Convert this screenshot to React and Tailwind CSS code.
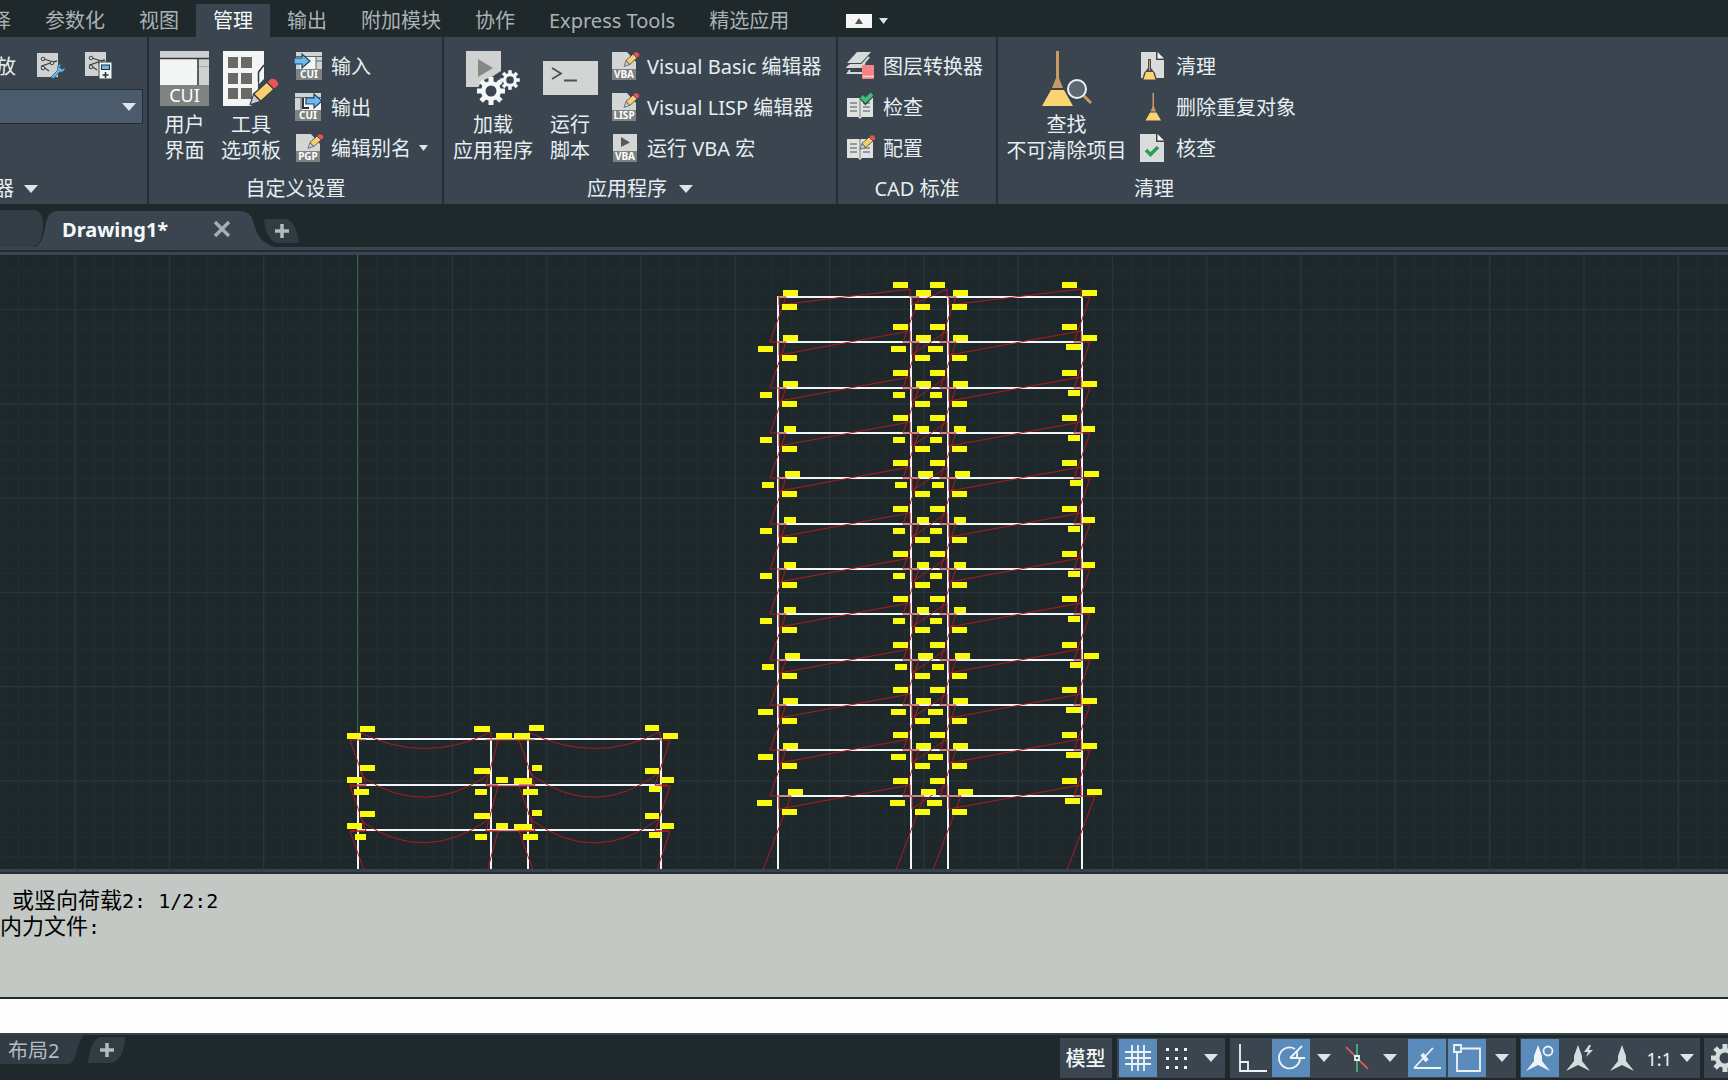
import React from "react";

const MENU_TABS = ["选择", "参数化", "视图", "管理", "输出", "附加模块", "协作", "Express Tools", "精选应用"];

/* ---------- small shared drawings ---------- */

const Caret = ({ small }) => (
  <svg width={small ? 9 : 14} height={small ? 6 : 8} viewBox="0 0 14 8" className="shrink-0" preserveAspectRatio="none">
    <path d="M0 0H14L7 8Z" fill="#dbe4e8" />
  </svg>
);

const Pencil = ({ transform }) => (
  <g transform={transform} strokeLinejoin="round">
    <path d="M0 19L3 10L9 16Z" fill="#c9cdd0" stroke="#3a454f" />
    <path d="M3 10L14 0L20 6L9 16Z" fill="#f7cf73" stroke="#3b3b34" strokeWidth="1.2" />
    <path d="M14 0L17 -3Q21 -4 23 -1Q25 2 23 4L20 6Z" fill="#ea5455" stroke="#3a454f" />
  </g>
);

const Tag = ({ text, y = 17, w = 24 }) => (
  <>
    <rect x="1" y={y} width={w} height="11" fill="#7e8281" />
    <text x={1 + w / 2} y={y + 9} fontSize="10" fontWeight="700" textAnchor="middle" fill="#fff">
      {text}
    </text>
  </>
);

const Icon = ({ children }) => (
  <svg width="28" height="28" viewBox="0 0 28 28" className="shrink-0 overflow-visible">
    {children}
  </svg>
);

const Arrow = ({ x, y }) => (
  <path
    transform={`translate(${x} ${y})`}
    d="M0 4H8V0L16 7L8 14V10H0Z"
    fill="#6cb8f0"
    stroke="#25425a"
    strokeWidth="1.2"
  />
);

const ImportIcon = () => (
  <Icon>
    <path d="M1 0H27V18H1Z" fill="#cfd3d1" />
    <path d="M5 5H21V18H5Z" fill="#f2f5f4" />
    <path d="M1 4.500H27M21 4V18M21 9H27" stroke="#5d666b" fill="none" />
    <Arrow x={-1} y={2} />
    <Tag text="CUI" w={26} />
  </Icon>
);

const ExportIcon = () => (
  <Icon>
    <path d="M0 0H26V18H0Z" fill="#cfd3d1" />
    <path d="M7 5H26V18H7Z" fill="#f2f5f4" />
    <path d="M0 4.500H26M6 4V18" stroke="#5d666b" fill="none" />
    <path d="M8 5V15H14" stroke="#2c3338" strokeWidth="2" fill="none" />
    <Arrow x={11} y={1} />
    <g transform="translate(-1 0)"><Tag text="CUI" w={26} /></g>
  </Icon>
);

const EditTagIcon = ({ text }) => (
  <Icon>
    <path d="M1 0H16L25 10V18H1Z" fill="#d3d6d4" />
    <Tag text={text} />
    <Pencil transform="translate(13 2) scale(.65)" />
  </Icon>
);

const RunVbaIcon = () => (
  <Icon>
    <path d="M2 0H26V18H2Z" fill="#d3d6d4" />
    <path d="M10 3L19 8.500L10 13Z" fill="#55595a" />
    <g transform="translate(1 0)"><Tag text="VBA" /></g>
  </Icon>
);

const LayerIcon = () => (
  <Icon>
    <path d="M10 0H24L14 11H0Z" fill="#d6dad8" />
    <path d="M3 13H15L22 5M3 13L1 15H14L18 11M3 18L1 21H15" fill="none" stroke="#d6dad8" strokeWidth="2" />
    <rect x="15" y="13" width="12" height="14" rx="1" fill="#f58484" />
    <path d="M16 24.500H27" stroke="#fbd5d3" strokeWidth="1.500" />
  </Icon>
);

const Book = () => (
  <>
    <path d="M0 5H12L13 6L14 5H26V24H15L13 26L11 24H0Z" fill="#dfe2df" />
    <path d="M13 6V24" stroke="#7b8082" />
    <path d="M3 10H10M3 14H10M3 18H10M16 10H23M16 14H23M16 18H23" stroke="#7e8386" strokeWidth="1.500" />
  </>
);

const CheckBookIcon = () => (
  <Icon>
    <Book />
    <path d="M15 4L18.500 8L25 1" fill="none" stroke="#3a454f" strokeWidth="6" />
    <path d="M14.500 3.500L18.500 7.500L25 1" fill="none" stroke="#3cc173" strokeWidth="4" />
  </Icon>
);

const ConfigBookIcon = () => (
  <Icon>
    <Book />
    <Pencil transform="translate(13 3) scale(.65)" />
  </Icon>
);

const Broom = () => (
  <>
    <path d="M14 0H17V28H14Z" fill="#c79a64" />
    <path d="M14 27H17L21 37H10Z" fill="#c79a64" />
    <path d="M9 39H22L31 55H0Z" fill="#fbd373" />
  </>
);

const PageIcon = ({ children }) => (
  <Icon>
    <path d="M1 0H16V8H24V26H1Z" fill="#d9dcda" />
    <path d="M17.500 0L24 6.500H17.500Z" fill="#f4f6f5" />
    {children}
  </Icon>
);

const PurgeIcon = () => (
  <PageIcon>
    <path d="M8 7H11V16L15 21L17 28H2L4 21L8 16Z" fill="#4c4c47" />
    <path d="M9 8H10V19H9Z" fill="#c79a64" />
    <path d="M6 20H13L15.500 27.500H3.500Z" fill="#fbd373" />
  </PageIcon>
);

const BroomIcon = () => (
  <Icon>
    <g transform="translate(5.500 0) scale(.5)"><Broom /></g>
  </Icon>
);

const AuditIcon = () => (
  <Icon>
    <path d="M0 0H16V8H24V28H0Z" fill="#d9dcda" />
    <path d="M17.500 0L24 6.500H17.500Z" fill="#f4f6f5" />
    <path d="M6 16L10.500 20.500L18 13" fill="none" stroke="#27a05a" strokeWidth="3.500" />
  </Icon>
);

const ActionRecorder = () => (
  <>
    <path d="M0 0H21V24H0Z" fill="#cfd2d0" />
    <path d="M7 6L16 9L5 13L12 18M16 9L20 8M5 13V17" fill="none" stroke="#3f4547" strokeWidth="1.300" />
    <circle cx="6" cy="6" r="1.800" fill="#cfd2d0" stroke="#3f4547" />
    <circle cx="15" cy="10" r="1.800" fill="#cfd2d0" stroke="#3f4547" />
    <circle cx="6" cy="15" r="1.800" fill="#cfd2d0" stroke="#3f4547" />
  </>
);

const RecorderPrefIcon = () => (
  <Icon>
    <g transform="translate(0 1)"><ActionRecorder /></g>
    <path d="M14 25L21 18Q19 12 25 12L22.500 15L25 17.500L28 15Q28 21 22.500 20L16 27Z" fill="#6cb8f0" stroke="#33506a" strokeWidth=".8" />
  </Icon>
);

const RecorderManageIcon = () => (
  <Icon>
    <ActionRecorder />
    <rect x="14" y="10" width="13" height="17" fill="#f3f6f5" stroke="#3a454f" />
    <rect x="16.500" y="13" width="8" height="4.500" fill="#6cb8f0" stroke="#233" />
    <path d="M20.500 20V26M17.500 23H23.500" stroke="#233" strokeWidth="1.500" />
  </Icon>
);

/* ---------- large ribbon icons ---------- */

const CuiIcon = () => (
  <svg width="49" height="55" viewBox="0 0 49 55">
    <path d="M0 0H49V55H0Z" fill="#cdd1cf" />
    <path d="M0 8H37V34H0Z" fill="#f3f6f4" />
    <path d="M0 7.500H49M38 8V34" stroke="#343b40" strokeWidth="1.500" />
    <path d="M39 15.500H49" stroke="#a4a9a8" />
    <path d="M0 34H49V55H0Z" fill="#7f8381" />
    <text x="24.500" y="51" fontSize="18" textAnchor="middle" fill="#fff">CUI</text>
  </svg>
);

const PaletteIcon = () => (
  <svg width="56" height="55" viewBox="0 0 56 55">
    <path d="M0 0H41V14L35 22V40L28 55H0Z" fill="#f3f6f4" />
    <path d="M36 22L41 14V28L36 33Z" fill="#f3f6f4" />
    <path d="M35.500 31V21L41 14" fill="none" stroke="#343b40" strokeWidth="1.500" />
    <path d="M5 6H15V17H5ZM18 6H29V17H18ZM5 22H15V33H5ZM18 22H29V33H18ZM5 37H15V48H5ZM18 37H29V48H18Z" fill="#6a6965" />
    <Pencil transform="translate(27 31) scale(1.200)" />
  </svg>
);

const gearTeeth = [0, 45, 90, 135, 180, 225, 270, 315];

const Gear = ({ x, y, s = 1, fill = "#f5f8f8", hole = "#3a454f" }) => (
  <g transform={`translate(${x} ${y}) scale(${s})`}>
    {gearTeeth.map((a) => (
      <rect key={a} x="-2.500" y="-14" width="5" height="7" fill={fill} transform={`rotate(${a})`} />
    ))}
    <circle r="10" fill={fill} />
    <circle r="5.500" fill={hole} />
  </g>
);

const LoadAppIcon = () => (
  <svg width="54" height="55" viewBox="0 0 54 55">
    <path d="M0 0H35V20L24 27L14 36H0Z" fill="#cfd2d1" />
    <path d="M12 8L27 17L12 26Z" fill="#858a89" />
    <circle cx="25" cy="40" r="13" fill="#3a454f" />
    <Gear x={25} y={40} />
    <Gear x={44} y={29} s={0.7} />
  </svg>
);

const ScriptIcon = () => (
  <svg width="55" height="55" viewBox="0 0 55 55">
    <path d="M0 10H55V44H0Z" fill="#d2d5d3" />
    <path d="M9 17L18 22.500L9 28M21 29.500H34" fill="none" stroke="#4b5154" strokeWidth="1.800" />
  </svg>
);

const FindPurgeIcon = () => (
  <svg width="50" height="55" viewBox="0 0 50 55">
    <Broom />
    <circle cx="35" cy="38" r="9.500" fill="#5b6771" stroke="#3a454f" strokeWidth="4" />
    <path d="M42 45L49 52" stroke="#c79a64" strokeWidth="3" />
    <circle cx="35" cy="38" r="9" fill="#5b6771" stroke="#eef3f4" strokeWidth="2" />
  </svg>
);

/* ---------- ribbon ---------- */

const Panel = ({ title, caret, className, children }) => (
  <section className={`flex flex-col shrink-0 h-full ${className}`}>
    <div className="flex gap-2 h-[131px] pt-[9px] pl-[5px]">{children}</div>
    <h2 className="flex items-center justify-center gap-3 h-9 pt-1.5 leading-6">
      {title}
      {caret && <Caret />}
    </h2>
  </section>
);

const BigButton = ({ icon, lines, className }) => (
  <button className={`flex flex-col items-center pt-[5px] leading-[26px] ${className}`}>
    {icon}
    <span className="flex flex-col pt-1.5 text-center whitespace-nowrap">
      <span>{lines[0]}</span>
      <span>{lines[1]}</span>
    </span>
  </button>
);

const ToolList = ({ items, className = "" }) => (
  <ul className={`flex flex-col gap-px ${className}`}>
    {items.map(({ icon, label, menu }) => (
      <li key={label}>
        <button className="flex items-center gap-2 h-10 whitespace-nowrap">
          {icon}
          <span className="pt-0.5">{label}</span>
          {menu && <Caret small />}
        </button>
      </li>
    ))}
  </ul>
);

const Ribbon = () => (
  <div className="flex h-[167px] shrink-0 overflow-hidden bg-[#3a454f] text-[#e6eef2]">
    <section className="flex flex-col shrink-0 w-[149px] border-r-2 border-[#222d38]">
      <div className="flex items-center h-10 mt-[9px]">
        <button className="w-10 -ml-6 mr-[21px] pt-0.5 text-left whitespace-nowrap">播放</button>
        <button className="mr-5" aria-label="首选项"><RecorderPrefIcon /></button>
        <button aria-label="管理动作宏"><RecorderManageIcon /></button>
      </div>
      <div className="relative mt-[3px] mr-1">
        <select aria-label="动作宏" className="block appearance-none w-full h-[35px] bg-[#4b5b6b] border border-l-0 border-[#222d38]">
          <option></option>
        </select>
        <span className="absolute right-[7px] top-[14px] pointer-events-none"><Caret /></span>
      </div>
      <h2 className="flex items-center gap-[10px] h-9 pt-1.5 mt-11 -ml-[126px] leading-6 whitespace-nowrap">
        <span className="w-[140px] text-right">动作录制器</span>
        <Caret />
      </h2>
    </section>

    <Panel title="自定义设置" className="w-[295px] border-r-2 border-[#222d38]">
      <div className="flex">
        <BigButton icon={<CuiIcon />} lines={["用户", "界面"]} className="w-[61px]" />
        <BigButton icon={<PaletteIcon />} lines={["工具", "选项板"]} className="w-[72px]" />
      </div>
      <ToolList
        items={[
          { icon: <ImportIcon />, label: "输入" },
          { icon: <ExportIcon />, label: "输出" },
          { icon: <EditTagIcon text="PGP" />, label: "编辑别名", menu: true },
        ]}
      />
    </Panel>

    <Panel title="应用程序" caret className="w-[394px] border-r-2 border-[#222d38]">
      <div className="flex">
        <BigButton icon={<LoadAppIcon />} lines={["加载", "应用程序"]} className="w-[88px]" />
        <BigButton icon={<ScriptIcon />} lines={["运行", "脚本"]} className="w-[66px]" />
      </div>
      <ToolList
        items={[
          { icon: <EditTagIcon text="VBA" />, label: "Visual Basic 编辑器" },
          { icon: <EditTagIcon text="LISP" />, label: "Visual LISP 编辑器" },
          { icon: <RunVbaIcon />, label: "运行 VBA 宏" },
        ]}
      />
    </Panel>

    <Panel title="CAD 标准" className="w-[160px] border-r-2 border-[#222d38]">
      <ToolList
        className="pl-1"
        items={[
          { icon: <LayerIcon />, label: "图层转换器" },
          { icon: <CheckBookIcon />, label: "检查" },
          { icon: <ConfigBookIcon />, label: "配置" },
        ]}
      />
    </Panel>

    <Panel title="清理" className="w-[312px]">
      <BigButton icon={<FindPurgeIcon />} lines={["查找", "不可清除项目"]} className="w-[127px]" />
      <ToolList
        className="pl-0.5"
        items={[
          { icon: <PurgeIcon />, label: "清理" },
          { icon: <BroomIcon />, label: "删除重复对象" },
          { icon: <AuditIcon />, label: "核查" },
        ]}
      />
    </Panel>
  </div>
);

const MenuTabs = () => (
  <nav className="flex items-end shrink-0 h-[37px] overflow-hidden text-[#a9b2b5]">
    <div className="flex -ml-[46px]">
      {MENU_TABS.map((t) => (
        <button
          key={t}
          className={`h-[33px] px-[17px] leading-[34px] whitespace-nowrap ${t === "管理" ? "bg-[#3a454f] text-[#f4f8f9]" : ""}`}
        >
          {t}
        </button>
      ))}
    </div>
    <button aria-label="最小化" className="flex items-center gap-[7px] h-[33px] ml-10">
      <svg width="26" height="14" viewBox="0 0 26 14">
        <path d="M0 0H26V14H0Z" fill="#f4f7f6" />
        <path d="M9 10L13 4L17 10Z" fill="#50585a" />
      </svg>
      <Caret small />
    </button>
  </nav>
);

const Plus = () => (
  <svg width="14" height="14" viewBox="0 0 14 14">
    <path d="M7 0V14M0 7H14" stroke="#b3bbbe" strokeWidth="3.500" />
  </svg>
);

const FileTabs = () => (
  <div className="shrink-0">
    <div className="flex items-end h-[43px] bg-[#1f282b]">
      <div className="w-[44px] h-[37px] -mr-2 bg-[#323d46] [clip-path:path('M0_0H32Q42_0_43_12Q44_32_34_37H0Z')]" />
      <div className="flex items-center w-[238px] h-9 pl-[26px] bg-[#3a454f] text-[#f4f8f9] [clip-path:path('M0_36C8_30_8_20_10_12Q12_0_22_0H204Q214_0_217_10C221_22_222_30_238_36Z')]">
        <span className="pt-0.5 font-bold">Drawing1*</span>
        <button aria-label="关闭" className="ml-auto mr-11">
          <svg width="16" height="16" viewBox="0 0 16 16" className="block">
            <path d="M1 1L15 15M15 1L1 15" stroke="#a6aeb2" strokeWidth="3.500" />
          </svg>
        </button>
      </div>
      <button
        aria-label="新建"
        className="flex items-center justify-center w-9 h-6 mb-1 -ml-[10px] bg-[#323c43] [clip-path:path('M0_0H22Q32_2_35_24H14Q2_22_0_0Z')]"
      >
        <Plus />
      </button>
    </div>
    <div className="h-2 bg-[#3a454f]">
      <div className="h-[5px] border-b-2 border-[#222d38]" />
    </div>
  </div>
);

/* ---------- drawing area ---------- */

const LEVELS = [297, 342, 388, 433, 478, 524, 569, 614, 660, 705, 750, 796];
const COLS = [778, 911, 948, 1082];

// label shift and width for the marks above (a) and below (d) a storey
const MARKS = {
  wide: { a: 5, aw: 15, d: -20, dw: 15 },
  mixed: { a: 5, aw: 15, d: -18, dw: 12 },
  narrow: { a: 6, aw: 12, d: -18, dw: 12 },
  inner: { a: 7, aw: 15, d: -16, dw: 12 },
  base: { a: 10, aw: 15, d: -21, dw: 15 },
};
const KINDS = ["wide", "wide", "mixed", "narrow", "inner", "narrow", "narrow", "narrow", "inner", "wide", "wide", "base"];

const Label = ({ x, y, w = 15 }) => <rect x={x} y={y} width={w} height="6" fill="#f8fb10" />;

const Tower = () => (
  <g>
    <g stroke="#f2f5f5" strokeWidth="2">
      {LEVELS.map((y) => <path key={y} d={`M778 ${y}H1082`} />)}
      {COLS.map((x) => <path key={x} d={`M${x} 296V900`} />)}
    </g>
    <g stroke="#b5181e" fill="none">
      {LEVELS.map((y, i) => {
        const lo = i === 0 ? 8 : 13;
        const hi = i === 0 ? 8 : 11;
        const top = i === 11 ? 13 : 8;
        return (
          <g key={y}>
            {[[0, 1], [1, 2], [2, 3]].map(([a, b]) => (
              <path key={a} d={`M${COLS[a] + 1} ${y}V${y + lo}L${COLS[b] - 1} ${y - hi}V${y}`} />
            ))}
            {COLS.map((x) =>
              i < 11 ? (
                <path key={x} d={`M${x} ${y}H${x + top}L${x - 8} ${LEVELS[i + 1]}H${x}`} />
              ) : (
                <path key={x} d={`M${x} ${y}H${x + top}L${x - 15} 870`} />
              )
            )}
          </g>
        );
      })}
    </g>
    {LEVELS.map((y, i) => {
      const m = MARKS[KINDS[i]];
      return (
        <g key={y}>
          {COLS.map((x, c) => (
            <Label key={x} x={x + m.a - (c === 3 ? 5 : 0)} y={y - 7} w={m.aw} />
          ))}
          {COLS.slice(0, 3).map((x) => <Label key={x} x={x + 4} y={y + (i === 0 ? 7 : 13)} />)}
          {COLS.slice(1).map((x) => <Label key={x} x={x - (x === 1082 ? 20 : 18)} y={y - (i === 0 ? 15 : 18)} />)}
          {i > 0 &&
            COLS.map((x, c) => (
              <Label key={x} x={x + m.d + (c === 3 ? 4 : 0)} y={y + (c === 3 ? 2 : 4)} w={m.dw} />
            ))}
        </g>
      );
    })}
  </g>
);

const SMALL_LABELS = [
  [360, 726, 15], [347, 733, 14], [474, 726, 16], [496, 733, 16], [514, 733, 16], [529, 725, 15], [645, 725, 14], [663, 733, 15],
  [360, 765, 15], [347, 777, 15], [354, 789, 15], [474, 768, 16], [475, 789, 12], [496, 777, 12], [514, 778, 18],
  [523, 789, 15], [532, 765, 10], [645, 768, 14], [661, 777, 13], [649, 786, 12],
  [360, 811, 15], [347, 823, 15], [355, 834, 11], [474, 813, 16], [475, 834, 12], [496, 823, 12], [514, 824, 18],
  [523, 834, 15], [532, 810, 10], [645, 813, 14], [661, 823, 13], [649, 832, 12],
];

const SmallFrame = () => (
  <g>
    <g stroke="#f2f5f5" strokeWidth="2">
      <path d="M358 739H661M358 785H661M358 830H661" />
      <path d="M358 738V900M491 738V900M528 738V900M661 738V900" />
    </g>
    <g stroke="#b5181e" fill="none">
      <path d="M359 732Q425 765 491 732V739M528 732Q595 765 660 732V739" />
      <path d="M359 770L364 778Q425 818 488 775M528 768L533 776Q595 820 659 773" />
      <path d="M359 815L364 823Q425 864 488 820M528 813L533 821Q595 866 659 819" />
      {[739, 785, 830].map((y) => (
        <g key={y}>
          <path d={`M350 ${y + 1}L366 ${y + 46}H350M498 ${y + 1}L486 ${y + 46}H498`} />
          <path d={`M519 ${y + 1}L535 ${y + 46}H519M670 ${y + 1}L655 ${y + 46}H668`} />
          <path d={`M350 ${y + 1}H366M486 ${y + 1}H535M655 ${y + 1}H670`} />
        </g>
      ))}
    </g>
    {SMALL_LABELS.map(([x, y, w]) => <Label key={`${x}-${y}`} x={x} y={y} w={w} />)}
  </g>
);

const DrawingArea = () => (
  <main className="flex-1 min-h-0 overflow-hidden bg-[#1e282b]">
    <svg className="block w-full h-full">
      <defs>
        <pattern id="minor" x="-19.700" y="214.700" width="18.860" height="18.860" patternUnits="userSpaceOnUse">
          <path d="M.5 0V18.860M0 .5H18.860" stroke="#222d30" fill="none" />
        </pattern>
        <pattern id="major" x="-19.700" y="214.700" width="94.300" height="94.300" patternUnits="userSpaceOnUse">
          <path d="M.5 0V94.300M0 .5H94.300" stroke="#2b3639" fill="none" />
        </pattern>
      </defs>
      <g transform="translate(0 -255)">
        <rect y="255" width="100%" height="200%" fill="url(#minor)" />
        <rect y="255" width="100%" height="200%" fill="url(#major)" />
        <path d="M357.500 255V739" stroke="#2a6b49" />
        <SmallFrame />
        <Tower />
      </g>
    </svg>
  </main>
);

/* ---------- command line ---------- */

const CommandLine = () => (
  <div className="shrink-0 border-t-[3px] border-[#36424a]">
    <div className="h-[127px] border-y-2 border-[#242e32] bg-[#c4c8c4] pt-[14px] leading-[26px] text-[20px] text-black whitespace-pre font-['DejaVu_Sans_Mono','Noto_Sans_CJK_SC',monospace]">
      <p className="pl-3"><span className="text-[22px]">或竖向荷载</span>2: 1/2:2</p>
      <p><span className="text-[22px]">内力文件</span>:</p>
    </div>
    <input aria-label="命令" className="block w-full h-[34px] px-2 bg-[#fdfefd] text-black outline-none" />
  </div>
);

/* ---------- status bar ---------- */

const StatusButton = ({ on, label, className = "w-[38px]", children }) => (
  <button
    aria-label={label}
    className={`flex items-center justify-center h-[38px] ${className} ${on ? "bg-[#5a8bba]" : ""}`}
  >
    {children}
  </button>
);

const Group = ({ className = "", children }) => (
  <div className={`flex items-center h-10 shrink-0 bg-[#3a454f] ${className}`}>{children}</div>
);

const Glyph = ({ children }) => (
  <svg width="28" height="28" viewBox="0 0 28 28" fill="none" stroke="#eef4f6" strokeWidth="1.800" className="shrink-0">
    {children}
  </svg>
);

const DropCell = () => (
  <StatusButton label="更多" className="w-7"><Caret /></StatusButton>
);

const person = "M12 1L16 12V17L24 27L12 21L0 27L8 17V12Z";

const StatusBar = () => (
  <footer className="flex items-start justify-between shrink-0 h-[47px] border-t-2 border-[#36424a] bg-[#1f282b]">
    <div className="flex">
      <button className="h-[29px] w-[84px] pl-2 text-left leading-[32px] bg-[#303b44] text-[#b3bcc0] [clip-path:path('M0_0H84C76_6_78_29_68_29H0Z')]">
        布局2
      </button>
      <button
        aria-label="新建布局"
        className="flex items-center justify-center w-[37px] h-[26px] mt-0.5 ml-1 bg-[#323c43] [clip-path:path('M12_0H37Q36_22_24_26H0Q2_4_12_0Z')]"
      >
        <Plus />
      </button>
    </div>

    <div className="flex gap-1 pt-[3px] overflow-hidden">
      <Group className="mr-px">
        <button className="w-[52px] pt-0.5 font-medium text-[#f0f5f6]">模型</button>
      </Group>
      <Group className="pl-0.5 mr-px gap-px">
        <StatusButton on label="栅格">
          <Glyph><path d="M8 1V27M14 1V27M20 1V27M1 8H27M1 14H27M1 20H27" /></Glyph>
        </StatusButton>
        <StatusButton label="捕捉">
          <Glyph>
            <path d="M3 5.500H25M3 14.500H25M3 23.500H25" strokeWidth="3" strokeDasharray="3 6" />
          </Glyph>
        </StatusButton>
        <DropCell />
      </Group>
      <Group className="pl-1">
        <StatusButton label="正交">
          <Glyph><path d="M1 0V27H28M1 18H9V27" /></Glyph>
        </StatusButton>
        <StatusButton on label="极轴">
          <Glyph>
            <path d="M23 14A10.500 10.500 0 1 1 18 5M13 14L25 2M13 14H28" />
            <path d="M20 7V14" />
          </Glyph>
        </StatusButton>
        <DropCell />
        <StatusButton label="等轴测">
          <Glyph>
            <path d="M3 3L25 25" stroke="#cf5b62" />
            <path d="M14 0V28" stroke="#43b373" />
            <path d="M12 12H16V16H12Z" fill="#3a454f" />
          </Glyph>
        </StatusButton>
        <DropCell />
      </Group>
      <Group className="-ml-1 pl-1 gap-0.5">
        <StatusButton on label="追踪">
          <Glyph><path d="M1 24H28M1 24L20 4" /><path d="M9 10L14 17" strokeWidth="4" /></Glyph>
        </StatusButton>
        <StatusButton on label="捕捉对象">
          <Glyph><path d="M1 1H8V8H1ZM8 4.500H27V27H4V8" /></Glyph>
        </StatusButton>
        <DropCell />
      </Group>
      <Group className="pl-px">
        <StatusButton on label="注释可见性">
          <Glyph>
            <path d={person} fill="#eef4f6" stroke="none" />
            <circle cx="22" cy="7" r="4.500" />
          </Glyph>
        </StatusButton>
        <StatusButton label="自动缩放" className="w-[42px]">
          <Glyph>
            <path d={person} fill="#d5dcdd" stroke="none" />
            <path d="M23 1L18 8H22L20 13L27 6H23L25 1Z" fill="#d5dcdd" stroke="none" />
          </Glyph>
        </StatusButton>
        <StatusButton label="注释比例" className="w-[42px]">
          <Glyph><path d={person} transform="translate(2 0)" fill="#d5dcdd" stroke="none" /></Glyph>
        </StatusButton>
        <button className="flex items-center gap-2 pl-1 pr-1.5 text-lg text-[#f0f5f6]">
          <span className="pt-0.5">1:1</span>
          <Caret />
        </button>
      </Group>
      <Group className="w-6 pl-[7px] overflow-hidden">
        <svg width="28" height="28" viewBox="0 0 28 28" className="shrink-0">
          <Gear x={14} y={14} fill="#d5dcdd" />
        </svg>
      </Group>
    </div>
  </footer>
);

const App = () => (
  <div className="flex flex-col h-screen overflow-hidden bg-[#1f282b] text-[20px] leading-6 font-['Noto_Sans','Noto_Sans_CJK_SC',sans-serif]">
    <MenuTabs />
    <Ribbon />
    <FileTabs />
    <DrawingArea />
    <CommandLine />
    <StatusBar />
  </div>
);

export default App;
